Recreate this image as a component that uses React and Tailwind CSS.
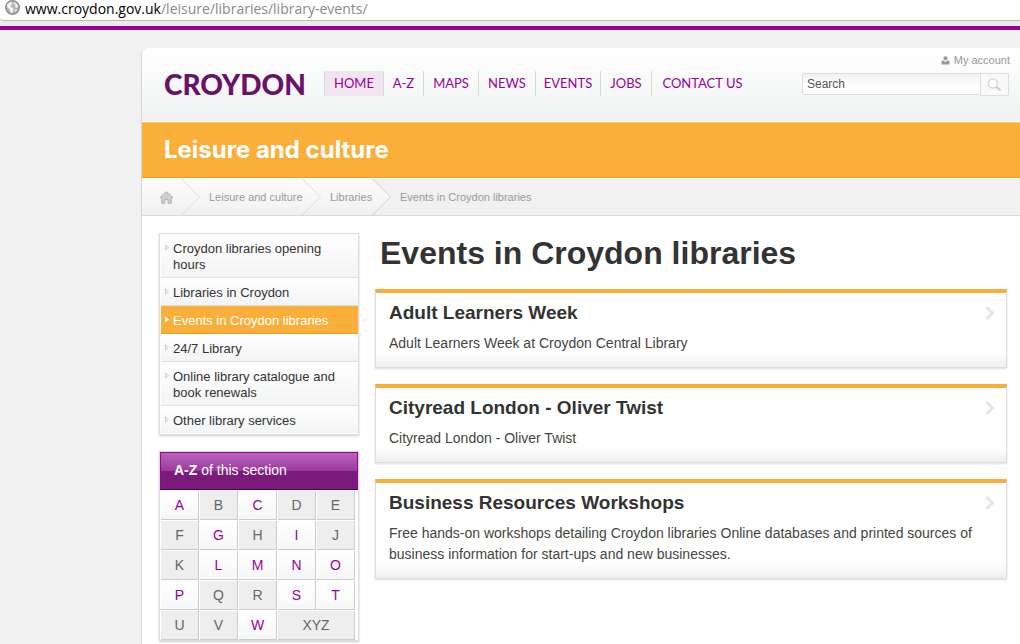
import { clsx } from 'clsx';

const navItems = [
    { label: 'HOME', width: 'w-[59px]', active: true },
    { label: 'A-Z', width: 'w-10' },
    { label: 'MAPS', width: 'w-[55px]' },
    { label: 'NEWS', width: 'w-[57px]' },
    { label: 'EVENTS', width: 'w-[65px]' },
    { label: 'JOBS', width: 'w-[51px]' },
    { label: 'CONTACT US', width: 'w-[101px]' },
];

const sideLinks = [
    'Croydon libraries opening hours',
    'Libraries in Croydon',
    'Events in Croydon libraries',
    '24/7 Library',
    'Online library catalogue and book renewals',
    'Other library services',
];

const letterRows = [
    ['A', 'B', 'C', 'D', 'E'],
    ['F', 'G', 'H', 'I', 'J'],
    ['K', 'L', 'M', 'N', 'O'],
    ['P', 'Q', 'R', 'S', 'T'],
    ['U', 'V', 'W', 'XYZ'],
];

const linkedLetters = 'ACGILMNOPSTW';

const events = [
    { title: 'Adult Learners Week', text: 'Adult Learners Week at Croydon Central Library' },
    { title: 'Cityread London - Oliver Twist', text: 'Cityread London - Oliver Twist' },
    {
        title: 'Business Resources Workshops',
        text: 'Free hands-on workshops detailing Croydon libraries Online databases and printed sources of business information for start-ups and new businesses.',
    },
];

const AddressBar = () => (
    <div className="h-[26px] bg-[#ebebeb]">
        <div className="flex h-[21px] items-start gap-1 rounded-bl border-b border-[#b9b9b9] bg-white pl-1">
            <svg width="17" height="16" viewBox="0 1 17 16" className="shrink-0" aria-hidden="true">
                <circle cx="8.5" cy="8.5" r="6.8" fill="#b5b5b5" stroke="#8b8b8b" strokeWidth="1.3" />
                <path d="M3 5.5 L6 3 L8.5 3.5 L8 5.5 L6.5 6.5 L7 8 L9 9 L9.5 11 L8 14 L6.5 13.5 L6 10.5 L3.5 8.5 Z" fill="#f4f4f4" />
                <path d="M10 3 L13 5 L14 8 L12 9 L11 7 L12 6 L10 5 Z M11 11 L13 10.5 L11.5 13 Z" fill="#f4f4f4" />
            </svg>
            <p className="font-['Open_Sans',sans-serif] text-sm leading-[18px] whitespace-nowrap text-[#8a8a8a]">
                <span className="text-black">www.croydon.gov.uk</span>/leisure/libraries/library-events/
            </p>
        </div>
    </div>
);

const Header = () => (
    <header className="flex h-[74px] items-start justify-between rounded-tl-md border-b border-white bg-linear-to-b from-white to-[#f0f2f2] pr-[10px] pl-[22px]">
        <div className="flex items-start">
            <a href="#home" className="mt-[19px] w-[160px] font-['Lato',sans-serif] text-[28px] leading-[34px] font-black text-[#6a116b]">
                CROYDON
            </a>
            <nav className="mt-[23px] flex h-[25px] border-l border-[#d9d9d9] font-['Lato',sans-serif] text-[13px] leading-[25px] text-[#990099]">
                {navItems.map((item, i) => (
                    <a
                        key={item.label}
                        href={`#${item.label}`}
                        className={clsx(
                            'text-center whitespace-nowrap',
                            item.width,
                            item.active && 'bg-[#f1e5f0]',
                            i < navItems.length - 1 && 'border-r border-[#d9d9d9]'
                        )}
                    >
                        {item.label}
                    </a>
                ))}
            </nav>
        </div>
        <div className="flex flex-col items-end pt-[5px]">
            <a href="#account" className="flex items-center gap-1 text-[11px] leading-[14px] text-[#999]">
                <svg width="9" height="9" viewBox="0 0 9 9" fill="#999" aria-hidden="true">
                    <circle cx="4.5" cy="2.2" r="2" />
                    <path d="M0.5 8.5 V6 Q0.5 4.5 2.2 4.3 L4.5 6 L6.8 4.3 Q8.5 4.5 8.5 6 V8.5 Z" />
                </svg>
                My account
            </a>
            <form className="mt-[6px] mr-px flex items-start">
                <input
                    type="text"
                    aria-label="Search"
                    defaultValue="Search"
                    className="h-[22px] w-[179px] rounded-l-xs border border-[#ddd] bg-linear-to-b from-[#f0f0f0] to-white to-60% px-1 text-xs text-[#555] outline-none"
                />
                <button type="button" aria-label="Go" className="-ml-px flex h-[23px] w-[29px] items-center justify-center rounded-r-xs border border-[#ddd] bg-[#f9f9f9]">
                    <svg width="15" height="14" viewBox="0 0 15 14" fill="none" aria-hidden="true">
                        <circle cx="6" cy="5.5" r="4.5" fill="#fff" stroke="#d8d8d8" strokeWidth="1.5" />
                        <path d="M9.5 9 L13.5 12.5" stroke="#c8c8c8" strokeWidth="2.2" />
                    </svg>
                </button>
            </form>
        </div>
    </header>
);

const CrumbArrow = ({ last }) => (
    <svg width="20" height="36" viewBox="0 0 20 36" className="shrink-0" aria-hidden="true">
        {last && <path d="M0 0 H20 V36 H0 L19 18 Z" fill="#f1f1f1" />}
        <path d="M0.5 0 L18.5 18 L0.5 36" fill="none" stroke={last ? '#d0d0d0' : '#dcdcdc'} />
    </svg>
);

const Breadcrumb = () => (
    <nav aria-label="Breadcrumb" className="flex h-[38px] border-y border-t-white border-b-[#dadada] bg-[#f1f1f1] text-[11px] leading-9 text-[#999]">
        <div className="flex bg-linear-to-b from-[#fdfdfd] to-[#f0f1f1]">
            <a href="#home" aria-label="Home" className="flex w-[39px] items-center pl-[17px]">
                <svg width="15" height="13" viewBox="0 0 15 13" aria-hidden="true">
                    <path d="M7.5 0.7 L14 6.5 H12.3 V12.3 H9 V8.5 H6 V12.3 H2.7 V6.5 H1 Z" fill="#cfcfcf" stroke="#b4b4b4" />
                </svg>
            </a>
            <CrumbArrow />
            <a href="#leisure" className="w-[101px] pl-2 whitespace-nowrap">Leisure and culture</a>
            <CrumbArrow />
            <a href="#libraries" className="w-[50px] pl-2">Libraries</a>
            <CrumbArrow last />
        </div>
        <span className="pl-2">Events in Croydon libraries</span>
    </nav>
);

const SideMenu = () => (
    <ul className="border border-[#ddd] bg-white pb-px pl-px shadow-[0_1px_2px_#ccc]">
        {sideLinks.map((label) => {
            const active = label.startsWith('Events');
            return (
                <li
                    key={label}
                    className={clsx(
                        'border-b last:border-b-0',
                        active
                            ? 'border-[#f79b2e] bg-[#fbaf3b] text-white'
                            : 'border-[#e0e0e0] bg-linear-to-b from-white to-[#f3f4f4] text-[#333]'
                    )}
                >
                    <a href="#section" className="flex items-start gap-1 pt-[7px] pr-5 pb-1 pl-1 text-[13px] leading-4">
                        <svg width="4" height="16" viewBox="0 0 4 16" className="shrink-0" aria-hidden="true">
                            <path d="M0.5 4 L3.5 6.5 L0.5 9 Z" fill={active ? '#fff' : '#eee'} stroke={active ? '#fff' : '#c4c4c4'} strokeWidth="0.8" />
                        </svg>
                        {label}
                    </a>
                </li>
            );
        })}
    </ul>
);

const LetterTable = () => (
    <section className="border border-[#ddd] bg-white shadow-[0_1px_2px_#ccc]">
        <h2 className="h-[38px] border border-[#990099] border-b-[#4a0a4a] bg-linear-to-b from-[#bb63bb] from-0% via-[#9c3a9c] via-50% to-[#7a1a7a] to-50% pl-[13px] text-sm leading-[35px] text-white">
            <strong>A-Z</strong> of this section
        </h2>
        <table className="ml-px table-fixed border-separate border-spacing-0 text-center text-sm">
            <tbody>
                {letterRows.map((row) => (
                    <tr key={row[0]}>
                        {row.map((letter) => {
                            const linked = linkedLetters.includes(letter);
                            return (
                                <td key={letter} colSpan={letter === 'XYZ' ? 2 : 1} className="h-[30px] w-[39px] pt-px pr-px">
                                    <div
                                        className={clsx(
                                            'h-[29px] border-r border-b border-[#ccc] leading-7',
                                            linked ? 'bg-linear-to-b from-white to-[#f6f7f7] text-[#990099]' : 'bg-[#eee] text-[#666]'
                                        )}
                                    >
                                        {linked ? <a href={`#${letter}`}>{letter}</a> : letter}
                                    </div>
                                </td>
                            );
                        })}
                    </tr>
                ))}
            </tbody>
        </table>
    </section>
);

const EventCard = ({ title, text }) => (
    <article className="border border-t-4 border-[#ddd] border-t-[#fbaf3b] bg-linear-to-t from-[#efefef] to-white to-[14px] pr-[11px] pb-[13px] pl-[13px] shadow-[0_1px_2px_#ddd]">
        <div className="flex items-start justify-between pt-2 pb-2">
            <h2 className="text-[19px] leading-6 font-bold text-[#333]">
                <a href="#event">{title}</a>
            </h2>
            <svg width="10" height="14" viewBox="0 0 10 14" className="mt-[5px] shrink-0" fill="none" aria-hidden="true">
                <path d="M1.5 1 L7.5 7 L1.5 13" stroke="#e6e6e6" strokeWidth="3" />
            </svg>
        </div>
        <p className="text-sm leading-[21px] text-[#444]">{text}</p>
    </article>
);

const App = () => {
    return (
        <div className="flex min-h-screen flex-col overflow-hidden bg-[#f1f1f1] font-['Liberation_Sans',Arial,sans-serif]">
            <AddressBar />
            <div className="h-1 bg-[#990099]" />
            <div className="mt-[18px] ml-[141px] flex grow flex-col rounded-tl-md border-l border-[#d5d5d5] bg-white">
                <Header />
                <div className="h-14 border-y border-t-[#fdc45f] border-b-[#f79b2e] bg-[#fbaf3b] pl-[22px]">
                    <p className="font-['Inter',sans-serif] text-2xl leading-[54px] font-bold text-white">Leisure and culture</p>
                </div>
                <Breadcrumb />
                <div className="flex items-start gap-4 pr-[13px] pb-[2px] pl-[17px]">
                    <aside className="flex w-[200px] shrink-0 flex-col gap-4 pt-[17px]">
                        <SideMenu />
                        <LetterTable />
                    </aside>
                    <main className="grow pt-[17px]">
                        <h1 className="pl-[5px] text-[32px] leading-10 font-bold text-[#333]">Events in Croydon libraries</h1>
                        <div className="mt-4 flex flex-col gap-4">
                            {events.map((event) => (
                                <EventCard key={event.title} {...event} />
                            ))}
                        </div>
                    </main>
                </div>
            </div>
        </div>
    );
};

export default App;
